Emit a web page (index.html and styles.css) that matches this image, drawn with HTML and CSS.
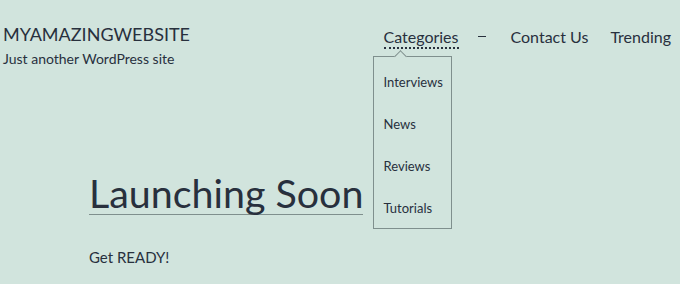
FILE: index.html
```html
<!DOCTYPE html>
<html>
<head>
<meta charset="utf-8">
<link rel="stylesheet" href="styles.css">
</head>
<body>
<header class="site-header">
  <div class="branding">
    <div class="site-title">MYAMAZINGWEBSITE</div>
    <div class="site-desc">Just another WordPress site</div>
  </div>
  <nav class="nav">
    <ul class="menu">
      <li class="menu-item has-sub">
        <span class="menu-link dotted">Categories</span>
        <span class="toggle"></span>
        <ul class="sub-menu">
          <li>Interviews</li>
          <li>News</li>
          <li>Reviews</li>
          <li>Tutorials</li>
        </ul>
      </li>
      <li class="menu-item"><span class="menu-link">Contact Us</span></li>
      <li class="menu-item"><span class="menu-link">Trending</span></li>
    </ul>
  </nav>
</header>
<main class="content">
  <h1 class="title">Launching Soon</h1>
  <p class="lead">Get READY!</p>
</main>
</body>
</html>
```
FILE: styles.css
```css
html, body {
  margin: 0;
  padding: 0;
  background: #d1e4dd;
  color: #28303d;
  font-family: Lato, "Open Sans", sans-serif;
  height: 100%;
  overflow: hidden;
}
.site-header {
  display: flex;
  justify-content: space-between;
  align-items: flex-start;
  padding: 22px 9px 0 3px;
}
.site-title {
  font-size: 18px;
  line-height: 24px;
}
.site-desc {
  font-size: 14px;
  line-height: 20px;
  margin-top: 3px;
}
.menu {
  list-style: none;
  margin: 0;
  padding: 0;
  display: flex;
  gap: 22px;
}
.menu-item {
  position: relative;
  display: flex;
  align-items: center;
  font-size: 16px;
  line-height: 28px;
  margin-top: 1px;
}
.dotted {
  border-bottom: 2px dotted #28303d;
  line-height: 21px;
}
.toggle {
  display: inline-block;
  width: 8px;
  height: 1px;
  background: #28303d;
  margin: 0 3px 2px 19px;
}
.sub-menu {
  position: absolute;
  list-style: none;
  margin: 0;
  padding: 16px 0 7px 10px;
  top: 33px;
  left: -11px;
  width: 67px;
  border: 1px solid #7f8f8d;
  background: #d1e4dd;
  font-size: 13px;
}
.sub-menu::before {
  content: "";
  position: absolute;
  top: -5px;
  left: 22px;
  width: 8px;
  height: 8px;
  background: #d1e4dd;
  border-left: 1px solid #7f8f8d;
  border-top: 1px solid #7f8f8d;
  transform: rotate(45deg);
}
.sub-menu li {
  line-height: 18px;
  height: 42px;
}
.sub-menu li:last-child {
  height: 22px;
}
.content {
  padding: 0 0 0 89px;
  margin-top: 103px;
}
.title {
  display: inline-block;
  margin: 0;
  font-weight: 400;
  font-size: 39.4px;
  line-height: 42px;
  border-bottom: 1px solid #7f8f8d;
}
.lead {
  margin: 33px 0 0;
  font-size: 15px;
}
```
